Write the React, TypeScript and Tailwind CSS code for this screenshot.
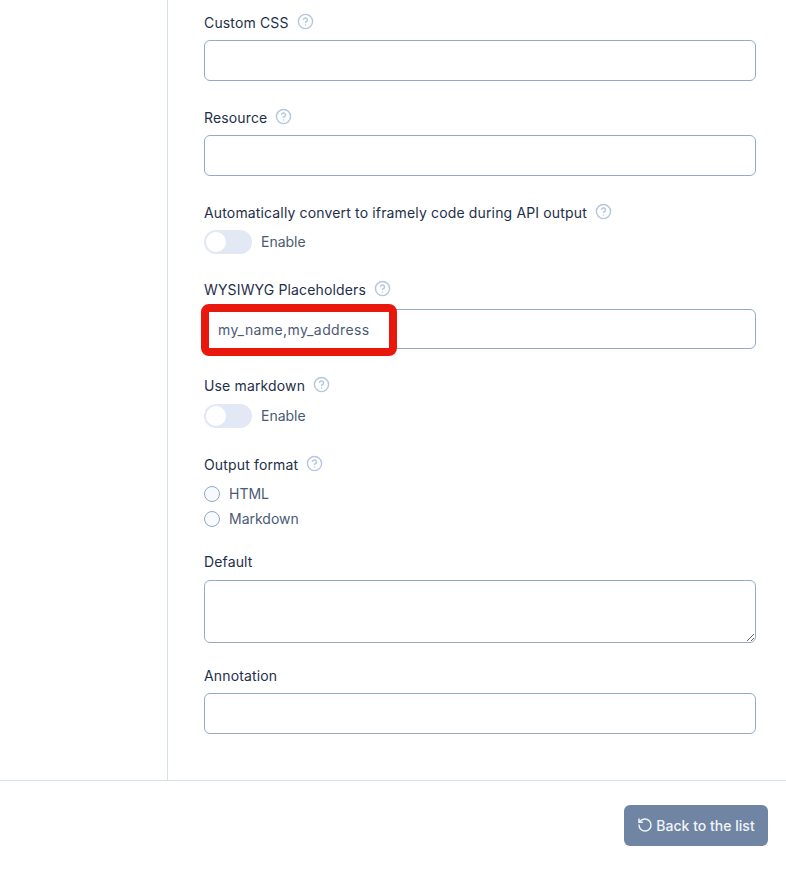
import React from "react";
import { CircleHelp, RotateCcw } from "lucide-react";

const Label = ({ text, help = true }: { text: string; help?: boolean }) => (
  <div className="flex items-center h-[20px] text-[14px] leading-[20px] tracking-[0.15px] text-[#1e2f4a]">
    <span>{text}</span>
    {help && <CircleHelp className="ml-[8px] -mt-[3px] h-[17px] w-[17px] text-[#b4c6e0]" strokeWidth={2} />}
  </div>
);

const Toggle = () => (
  <div className="flex items-center h-[24px]">
    <div className="flex items-center w-[48px] h-[24px] rounded-full bg-[#e2e9f4] pl-[2px]">
      <div className="w-[20px] h-[20px] rounded-full bg-white" />
    </div>
    <span className="ml-[9px] -mt-px text-[14px] text-[#4a5a75]">Enable</span>
  </div>
);

const Radio = ({ text }: { text: string }) => (
  <div className="flex items-center h-[25px]">
    <div className="w-[16px] h-[16px] rounded-full border border-[#8fa6c6] bg-[#f8fafd]" />
    <span className="ml-[9px] -mt-px text-[14px] text-[#4a5a75]">{text}</span>
  </div>
);

const inputCls = "block w-full rounded-[6px] border border-[#94aac9] bg-white";

export default function App() {
  return (
    <div className="w-[786px] h-[870px] overflow-hidden bg-white font-['Inter',sans-serif]">
      <div className="flex h-[781px] border-b border-[#d5e0ea]">
        <div className="w-[168px] shrink-0 border-r border-[#d5e0ea]" />
        <div className="flex-1 pl-[36px] pr-[30px] pt-[13px]">
          <Label text="Custom CSS" />
          <div className={`${inputCls} h-[41px] mt-[7px]`} />

          <div className="mt-[27px]"><Label text="Resource" /></div>
          <div className={`${inputCls} h-[41px] mt-[7px]`} />

          <div className="mt-[27px]"><Label text="Automatically convert to iframely code during API output" /></div>
          <div className="mt-[7px]"><Toggle /></div>

          <div className="mt-[26px]"><Label text="WYSIWYG Placeholders" /></div>
          <div className="relative mt-[9px]">
            <div className={`${inputCls} h-[40px] flex items-center px-[13px] text-[14px] tracking-[0.4px] text-[#4a5a75]`}>my_name,my_address</div>
            {/* red highlight drawn over the input */}
            <div className="absolute left-[-3px] top-[-5px] w-[196px] h-[52px] rounded-[8px] border-[8px] border-[#e8190c]" />
          </div>

          <div className="mt-[27px]"><Label text="Use markdown" /></div>
          <div className="mt-[8px]"><Toggle /></div>

          <div className="mt-[27px]"><Label text="Output format" /></div>
          <div className="mt-[6px]">
            <Radio text="HTML" />
            <Radio text="Markdown" />
          </div>

          <div className="mt-[21px]"><Label text="Default" help={false} /></div>
          <textarea className={`${inputCls} h-[63px] mt-[8px]`} />

          <div className="mt-[23px]"><Label text="Annotation" help={false} /></div>
          <div className={`${inputCls} h-[41px] mt-[7px]`} />
        </div>
      </div>
      <div className="flex justify-end pt-[24px] pr-[18px]">
        <button className="flex items-center justify-center w-[144px] h-[41px] rounded-[6px] bg-[#6f85a3] text-[14px] font-medium tracking-[0.02px] text-[#f1f4f8]">
          <RotateCcw className="h-[16px] w-[16px] mr-[3px] -mt-[1px]" strokeWidth={2.2} />
          Back to the list
        </button>
      </div>
    </div>
  );
}
